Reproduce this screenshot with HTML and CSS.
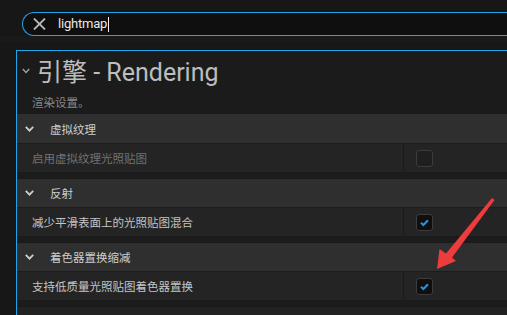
FILE: index.html
```html
<!DOCTYPE html>
<html>
<head>
<meta charset="utf-8">
<link rel="stylesheet" href="styles.css">
</head>
<body>
<div class="app">
  <div class="search">
    <svg class="clear" width="13" height="12" viewBox="0 0 13 12"><path d="M1 0.5 L12 11.5 M12 0.5 L1 11.5" stroke="#b8b8b8" stroke-width="1.8" fill="none"/></svg>
    <span class="query">lightmap</span><span class="caret"></span>
  </div>
  <div class="band"></div>
  <div class="panel">
    <div class="title">
      <svg class="chev-s" width="8" height="6" viewBox="0 0 8 6"><path d="M0.8 1 L4 4.5 L7.2 1" stroke="#a0a0a0" stroke-width="1.4" fill="none"/></svg>
      <span>引擎 - Rendering</span>
    </div>
    <div class="desc">渲染设置。</div>

    <div class="group first">
      <svg class="chev" width="9" height="6" viewBox="0 0 9 6"><path d="M0.8 0.8 L4.5 4.6 L8.2 0.8" stroke="#cfcfcf" stroke-width="1.8" fill="none"/></svg>
      <span>虚拟纹理</span>
    </div>
    <div class="row disabled">
      <div class="name">启用虚拟纹理光照贴图</div>
      <div class="value"><span class="cb"></span></div>
    </div>
    <div class="gap"></div>

    <div class="group">
      <svg class="chev" width="9" height="6" viewBox="0 0 9 6"><path d="M0.8 0.8 L4.5 4.6 L8.2 0.8" stroke="#cfcfcf" stroke-width="1.8" fill="none"/></svg>
      <span>反射</span>
    </div>
    <div class="row">
      <div class="name">减少平滑表面上的光照贴图混合</div>
      <div class="value"><span class="cb on"><svg width="17" height="17" viewBox="0 0 17 17"><path d="M5 8.8 L7.4 11 L12 6.3" stroke="#2a93dc" stroke-width="2" fill="none"/></svg></span></div>
    </div>
    <div class="gap"></div>

    <div class="group">
      <svg class="chev" width="9" height="6" viewBox="0 0 9 6"><path d="M0.8 0.8 L4.5 4.6 L8.2 0.8" stroke="#cfcfcf" stroke-width="1.8" fill="none"/></svg>
      <span>着色器置换缩减</span>
    </div>
    <div class="row">
      <div class="name">支持低质量光照贴图着色器置换</div>
      <div class="value"><span class="cb on"><svg width="17" height="17" viewBox="0 0 17 17"><path d="M5 8.8 L7.4 11 L12 6.3" stroke="#2a93dc" stroke-width="2" fill="none"/></svg></span></div>
    </div>
    <div class="gap"></div>
    <div class="group tail"></div>
  </div>
  <svg class="arrow" width="507" height="315" viewBox="0 0 507 315">
    <polygon points="492,198 494.5,200 452,257.5 456,261 437,269 439.5,249 446,253.5" fill="#ee3b3b"/>
  </svg>
</div>
</body>
</html>
```

FILE: styles.css
```css
* { box-sizing: border-box; }
html, body { margin: 0; padding: 0; }
body {
  background: #161616;
  width: 507px;
  height: 315px;
  overflow: hidden;
  font-family: Roboto, "Noto Sans CJK SC", sans-serif;
}
.app {
  position: relative;
  width: 507px;
  height: 315px;
  overflow: hidden;
  padding-top: 12px;
  background: #171717;
}
.search {
  margin-left: 22px;
  height: 24px;
  border: 1px solid #1ea6ea;
  border-right: none;
  border-radius: 12px 0 0 12px;
  background: #0f0f0f;
  display: flex;
  align-items: center;
  padding-left: 10px;
}
.clear { display: block; margin-right: 12px; }
.query {
  color: #e8e8e8;
  font-size: 13px;
  line-height: 16px;
  font-family: Roboto, sans-serif;
  letter-spacing: -0.2px;
}
.caret {
  display: block;
  width: 1px;
  height: 15px;
  background: #f0f0f0;
  margin-left: 1px;
}
.band {
  height: 14px;
  background: linear-gradient(#1a1a1a 0, #1a1a1a 6px, #171717 7px);
}
.panel {
  margin-left: 16px;
  border-left: 1px solid #1ea6ea;
  border-top: 1px solid #1ea6ea;
  background: #1b1b1b;
  height: 265px;
  overflow: hidden;
}
.title {
  height: 38px;
  display: flex;
  align-items: center;
  padding-left: 5px;
  gap: 7px;
  color: #bdbdbd;
  font-size: 25px;
  font-family: Roboto, "Noto Sans CJK SC", sans-serif;
}
.chev-s { display: block; margin-top: 2px; }
.desc {
  height: 25px;
  padding-left: 15px;
  display: flex;
  align-items: center;
  color: #8a8a8a;
  font-size: 11.5px;
}
.group {
  height: 30px;
  background: #2f2f2f;
  border-top: 1px solid #1a1a1a;
  border-bottom: 1px solid #1c1c1c;
  display: flex;
  align-items: center;
  padding-left: 8px;
  gap: 16px;
  color: #cdcdcd;
  font-size: 11.5px;
}
.group.first { border-top: none; height: 30px; }
.chev { display: block; }
.row {
  height: 29px;
  display: flex;
  background: #242424;
  border-bottom: 1px solid #1a1a1a;
}
.name {
  width: 387px;
  border-right: 1px solid #1a1a1a;
  padding-left: 15px;
  display: flex;
  align-items: center;
  color: #c4c4c4;
  font-size: 11.5px;
}
.row.disabled .name { color: #727272; }
.value {
  flex: 1;
  display: flex;
  align-items: center;
  padding-left: 12px;
}
.cb {
  display: block;
  width: 17px;
  height: 17px;
  border: 1px solid #3c3c3c;
  border-radius: 3px;
  background: #1f1f1f;
  position: relative;
}
.cb.on { background: #0f0f0f; }
.cb svg { position: absolute; left: -1px; top: -1px; display: block; }
.gap {
  height: 5px;
  background: #1c1c1c;
}
.group.tail { background: #222222; border-top: 1px solid #1a1a1a; }
.arrow {
  position: absolute;
  left: 0;
  top: 0;
  pointer-events: none;
}
```
